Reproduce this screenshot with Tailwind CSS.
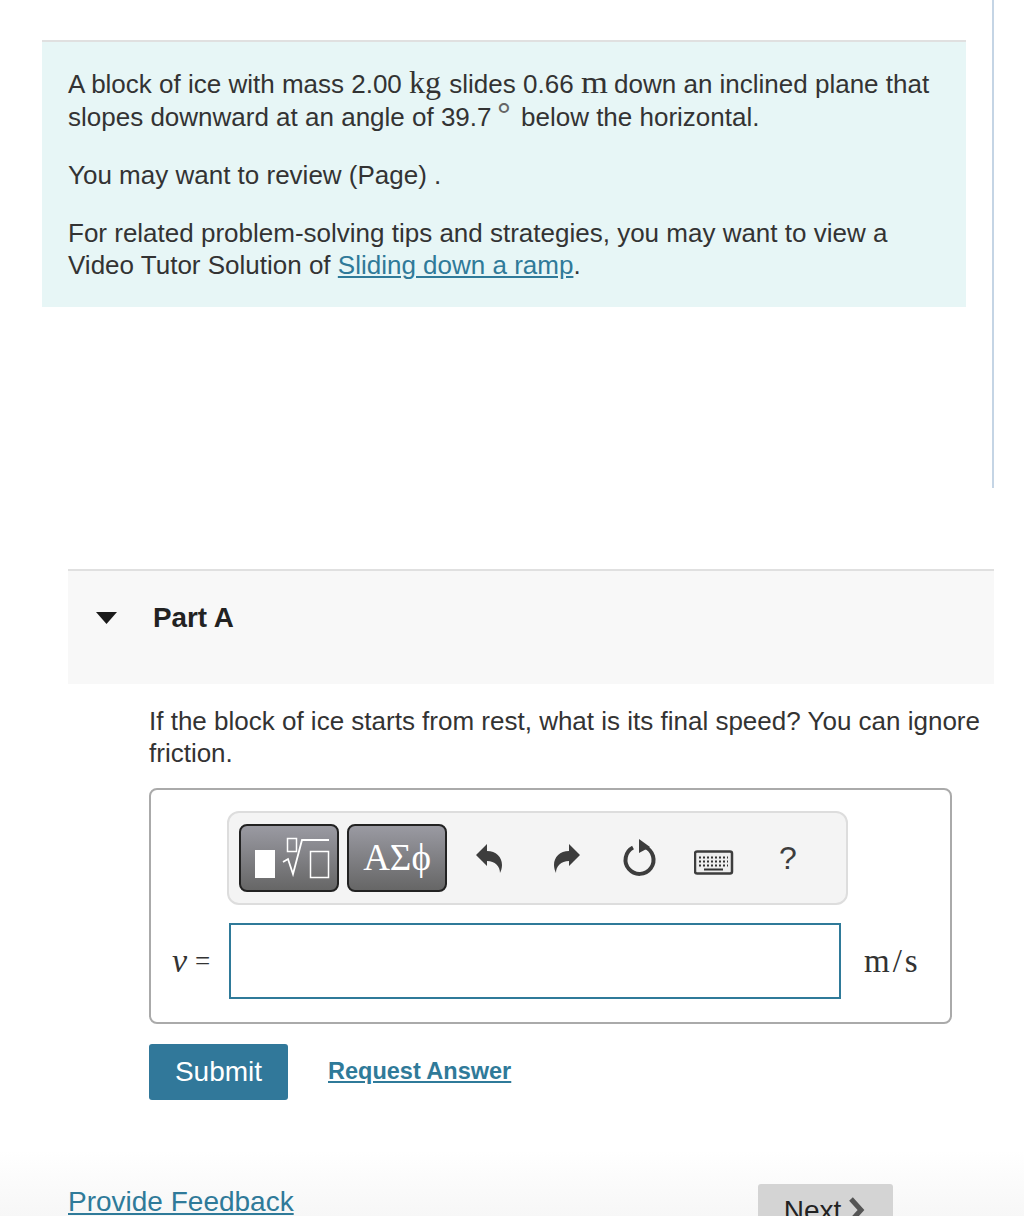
<!DOCTYPE html>
<html><head><meta charset="utf-8"><script src="https://cdn.jsdelivr.net/npm/@tailwindcss/browser@4"></script></head>
<body class="bg-white">
<div class="relative w-[1024px] h-[1216px] overflow-hidden font-['Liberation_Sans',sans-serif] text-[#333] text-[26px] leading-[32px] bg-[linear-gradient(to_bottom,#fff_0,#fff_1150px,#f7f7f7_1216px)]">
  <div class="absolute left-[992px] top-0 w-[2px] h-[488px] bg-[#c5d5e5]"></div>
  <div class="pt-[40px]">
    <div class="ml-[42px] w-[924px] h-[267px] bg-[#e7f6f6] border-t-2 border-[#e0e0e0] pl-[26px] pr-[20px] pt-[26px]">
      <p class="m-0">
        <span class="block whitespace-nowrap">A block of ice with mass 2.00 <span class="font-['Liberation_Serif',serif] text-[32px] leading-[20px]">kg</span> <span class="ml-[1px]">slides</span> 0.66 <span class="inline-block w-[26px] scale-x-[1.08] origin-left font-['Liberation_Serif',serif] text-[32px] leading-[20px]">m</span> down an inclined plane that</span>
        <span class="block mt-[1px] whitespace-nowrap">slopes downward at an angle of 39.7 <span class="inline-block w-[15px] relative top-[3px] left-[-2px] text-[36px] leading-[20px] text-[#666]">°</span> below the horizontal.</span>
      </p>
      <p class="mt-[26px]">You may want to review (Page) .</p>
      <p class="mt-[26px]">For related problem-solving tips and strategies, you may want to view a Video Tutor Solution of <a class="text-[#2f7a99] underline">Sliding down a ramp</a>.</p>
    </div>
  </div>
  <div class="ml-[68px] mt-[262px] w-[926px] h-[115px] bg-[#f8f8f8] border-t-2 border-[#e0e0e0] flex items-start">
    <svg class="ml-[28px] mt-[41px] w-[21px] h-[12px]" viewBox="0 0 21 12"><path d="M0 0H21L10.5 12Z" fill="#1a1a1a"/></svg>
    <div class="ml-[36px] mt-[31px] font-bold text-[27.8px] leading-[32px] text-[#222]">Part A</div>
  </div>
  <div class="ml-[149px] w-[845px]">
    <p class="mt-[21px]">If the block of ice starts from rest, what is its final speed? You can ignore friction.</p>
    <div class="mt-[19px] w-[803px] h-[236px] rounded-[8px] border-2 border-[#aaa] bg-white">
      <div class="ml-[76px] mt-[21px] w-[621px] h-[94px] rounded-[12px] border-2 border-[#ddd] bg-[#f4f4f4] flex items-center pl-[10px]">
        <div class="w-[100px] h-[68px] rounded-[8px] border-2 border-[#222] bg-[linear-gradient(to_bottom,#9a9aa2,#666)] flex items-center justify-center">
          <svg width="84" height="56" viewBox="0 0 84 56" fill="none" stroke="#fff"><rect x="8" y="20" width="20" height="28" fill="#fff" stroke="none"/><rect x="40.500" y="8.500" width="9" height="13" stroke-width="1.500"/><path d="M36 32l5-3 5 15 9-34h27" stroke-width="1.800"/><rect x="63.500" y="21.500" width="18" height="26" stroke-width="1.500"/></svg>
        </div>
        <div class="ml-[8px] w-[100px] h-[68px] rounded-[8px] border-2 border-[#222] bg-[linear-gradient(to_bottom,#9a9aa2,#666)] flex items-center justify-center font-['Liberation_Serif',serif] text-white text-[37px]">ΑΣϕ</div>
        <svg class="ml-[24px]" width="36" height="36" viewBox="0 0 36 36" fill="#3d3d3d"><path d="M5 15 16 4v7c9 0 15 6 15 14 0 3-1 6-2 8 0-7-5-12-13-12v5Z"/></svg>
        <svg class="ml-[42px]" width="36" height="36" viewBox="0 0 36 36" fill="#3d3d3d"><path d="M31 15 20 4v7C11 11 5 17 5 25c0 3 1 6 2 8 0-7 5-12 13-12v5Z"/></svg>
        <svg class="ml-[37px]" width="36" height="40" viewBox="0 0 36 40" fill="none"><path d="M11 9.500A14 14 0 1 0 23 9" stroke="#3d3d3d" stroke-width="4"/><path d="M17 1 28 9 17 15Z" fill="#3d3d3d"/></svg>
        <svg class="ml-[36px] mt-[10px]" width="40" height="26" viewBox="0 0 40 26"><rect x="1" y="1.500" width="37" height="22" rx="2" fill="#eee" stroke="#3d3d3d" stroke-width="2.500"/><path d="M5 7.500h29M5 11.500h29M5 15.500h29" stroke="#333" stroke-width="2" stroke-dasharray="2 2"/><path d="M10 19.500h19" stroke="#333" stroke-width="2"/></svg>
        <div class="ml-[45px] text-[32px] leading-[40px] text-[#3d3d3d]">?</div>
      </div>
      <div class="mt-[18px] flex items-center h-[76px]">
        <div class="ml-[21px] w-[57px] flex items-center gap-[8px] font-['Liberation_Serif',serif] text-[#333] whitespace-nowrap"><i class="text-[34px]">v</i><span class="text-[27px]">=</span></div>
        <div class="w-[612px] h-[76px] border-2 border-[#2f7a99] bg-white"></div>
        <div class="ml-[23px] font-['Liberation_Serif',serif] text-[33px] tracking-[3px]">m/s</div>
      </div>
    </div>
    <div class="mt-[20px] flex items-center">
      <div class="w-[139px] h-[56px] rounded-[3px] bg-[#31789a] text-white text-[28px] flex items-center justify-center">Submit</div>
      <a class="ml-[40px] mt-[-3px] text-[#2f7a99] underline font-bold text-[23.500px]">Request Answer</a>
    </div>
  </div>
  <div class="flex items-start mt-[84px]">
    <a class="ml-[68px] mt-[1px] text-[#2f7a99] underline text-[28px] leading-[34px]">Provide Feedback</a>
    <div class="ml-[464px] w-[135px] h-[60px] rounded-t-[3px] bg-[#d4d4d4] pl-[26px] pt-[7px] flex items-start text-[28px] leading-[40px] text-[#222]">Next<svg class="ml-[7px] mt-[4px] shrink-0" width="17" height="30" viewBox="0 0 17 30" fill="none"><path d="M3 4 13 15 3 26" stroke="#555" stroke-width="5"/></svg></div>
  </div>
</div>
</body></html>
